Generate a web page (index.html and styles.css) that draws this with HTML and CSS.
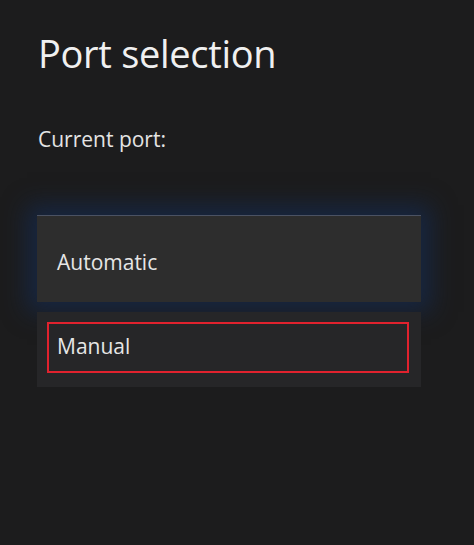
FILE: index.html
```html
<!DOCTYPE html>
<html lang="en">
<head>
<meta charset="utf-8">
<title>Port selection</title>
<link rel="stylesheet" href="styles.css">
</head>
<body>
<main class="page">
  <h1 class="title">Port selection</h1>
  <p class="label">Current port:</p>
  <ul class="options">
    <li class="option option-focused">Automatic</li>
    <li class="option option-plain">
      <span class="option-text">Manual</span>
      <span class="highlight"></span>
    </li>
  </ul>
</main>
</body>
</html>
```
FILE: styles.css
```css
html, body {
  margin: 0;
  padding: 0;
  background: #1c1c1d;
  height: 100%;
}
body {
  font-family: "Open Sans", "Noto Sans", sans-serif;
  color: #ebebeb;
}
.page {
  padding: 29px 53px 0 37px;
}
.title {
  margin: 0 0 0 1px;
  font-size: 38px;
  font-weight: 400;
  line-height: 48px;
  letter-spacing: -0.3px;
  color: #f0f0f0;
}
.label {
  margin: 49px 0 0 1px;
  font-size: 21px;
  line-height: 26px;
  color: #e4e4e4;
}
.options {
  list-style: none;
  margin: 63px 0 0 0;
  padding: 0;
  display: flex;
  flex-direction: column;
  gap: 10px;
}
.option {
  position: relative;
  display: flex;
  align-items: center;
  padding-left: 20px;
  font-size: 21px;
  color: #e6e6e6;
  box-sizing: border-box;
}
.option-focused {
  height: 87px;
  background: #2d2d2d;
  border-top: 1px solid #4b5262;
  box-shadow: 0 0 22px 10px rgba(20, 45, 88, 0.6);
  padding-top: 5px;
}
.option-plain {
  height: 75px;
  background: #262628;
  padding-bottom: 8px;
}
.highlight {
  position: absolute;
  left: 10px;
  top: 10px;
  width: 362px;
  height: 51px;
  border: 2px solid #e1222e;
  box-sizing: border-box;
}
```
